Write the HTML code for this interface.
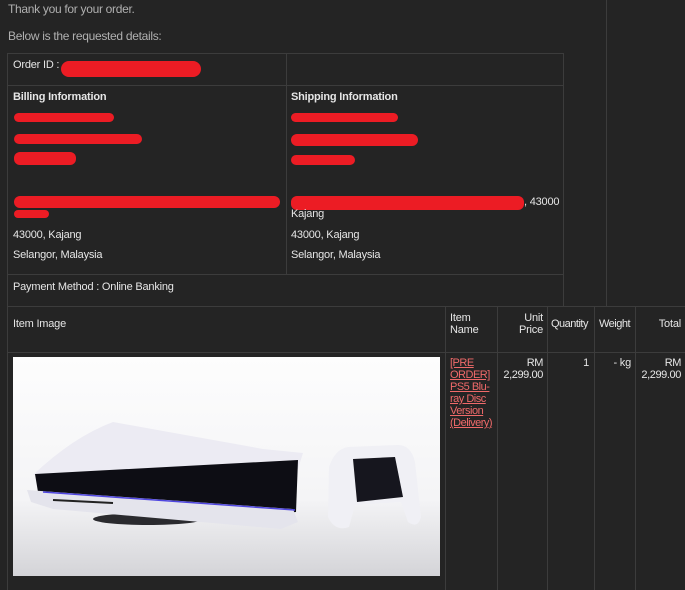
<!DOCTYPE html>
<html><head><meta charset="utf-8"><style>
*{margin:0;padding:0;box-sizing:border-box}
body{width:685px;height:590px;background:#242424;font-family:"Liberation Sans",Arial,sans-serif;font-size:11px;letter-spacing:-0.2px;color:#e6e6e6;position:relative;overflow:hidden}
.a{position:absolute;white-space:nowrap}
.h{position:absolute;height:1px;background:#3c3c3c}
.v{position:absolute;width:1px;background:#3c3c3c}
.r{position:absolute;background:#ec1c24;border-radius:6px}
.g{color:#b0b0b0;font-size:12px;letter-spacing:-0.3px}
b{font-weight:bold}
.lnk{color:#f06a6a;text-decoration:underline;line-height:12px}
</style></head><body>
<div class="a g" style="left:8px;top:2px">Thank you for your order.</div>
<div class="a g" style="left:8px;top:29px">Below is the requested details:</div>

<div class="v" style="left:606px;top:0;height:306px"></div>

<div class="h" style="left:7px;top:53px;width:557px"></div>
<div class="h" style="left:7px;top:85px;width:557px"></div>
<div class="h" style="left:7px;top:274px;width:557px"></div>
<div class="v" style="left:7px;top:53px;height:537px"></div>
<div class="v" style="left:563px;top:53px;height:253px"></div>
<div class="v" style="left:286px;top:53px;height:221px"></div>

<div class="a" style="left:13px;top:59px">Order ID :</div>
<div class="r" style="left:61px;top:61px;width:140px;height:16px;border-radius:8px"></div>
<div class="a" style="left:13px;top:91px"><b>Billing Information</b></div>
<div class="a" style="left:291px;top:91px"><b>Shipping Information</b></div>

<div class="r" style="left:14px;top:113px;width:100px;height:9px"></div>
<div class="r" style="left:14px;top:134px;width:128px;height:10px"></div>
<div class="r" style="left:14px;top:152px;width:62px;height:13px"></div>
<div class="r" style="left:14px;top:196px;width:266px;height:12px"></div>
<div class="r" style="left:14px;top:210px;width:35px;height:8px"></div>
<div class="a" style="left:13px;top:229px">43000, Kajang</div>
<div class="a" style="left:13px;top:249px">Selangor, Malaysia</div>

<div class="r" style="left:291px;top:113px;width:107px;height:9px"></div>
<div class="r" style="left:291px;top:134px;width:127px;height:12px"></div>
<div class="r" style="left:291px;top:155px;width:64px;height:10px"></div>
<div class="r" style="left:291px;top:196px;width:233px;height:14px"></div>
<div class="a" style="left:524px;top:196px">, 43000</div>
<div class="a" style="left:291px;top:208px">Kajang</div>
<div class="a" style="left:291px;top:229px">43000, Kajang</div>
<div class="a" style="left:291px;top:249px">Selangor, Malaysia</div>

<div class="a" style="left:13px;top:281px">Payment Method : Online Banking</div>

<div class="h" style="left:7px;top:306px;width:678px"></div>
<div class="h" style="left:7px;top:352px;width:678px"></div>
<div class="v" style="left:445px;top:306px;height:284px"></div>
<div class="v" style="left:497px;top:306px;height:284px"></div>
<div class="v" style="left:547px;top:306px;height:284px"></div>
<div class="v" style="left:594px;top:306px;height:284px"></div>
<div class="v" style="left:635px;top:306px;height:284px"></div>

<div class="a" style="left:13px;top:318px">Item Image</div>
<div class="a" style="left:450px;top:312px;line-height:12px">Item<br>Name</div>
<div class="a" style="left:500px;top:312px;width:43px;text-align:right;line-height:12px">Unit<br>Price</div>
<div class="a" style="left:551px;top:318px;letter-spacing:-0.5px">Quantity</div>
<div class="a" style="left:599px;top:318px;letter-spacing:-0.5px">Weight</div>
<div class="a" style="left:640px;top:318px;width:41px;text-align:right">Total</div>

<div class="a lnk" style="left:450px;top:357px;letter-spacing:-0.5px">[PRE<br>ORDER]<br>PS5 Blu-<br>ray Disc<br>Version<br>(Delivery)</div>
<div class="a" style="left:499px;top:357px;width:44px;text-align:right;line-height:12px;letter-spacing:-0.4px">RM<br>2,299.00</div>
<div class="a" style="left:551px;top:357px;width:38px;text-align:right">1</div>
<div class="a" style="left:599px;top:357px;width:32px;text-align:right">- kg</div>
<div class="a" style="left:637px;top:357px;width:44px;text-align:right;line-height:12px;letter-spacing:-0.4px">RM<br>2,299.00</div>

<svg class="a" style="left:13px;top:357px" width="427" height="219" viewBox="0 0 427 219">
<defs><linearGradient id="bg" x1="0" y1="0" x2="0" y2="1"><stop offset="0" stop-color="#fdfdfd"/><stop offset=".65" stop-color="#f4f4f6"/><stop offset="1" stop-color="#d4d4d8"/></linearGradient></defs>
<rect width="427" height="219" fill="url(#bg)"/>
<ellipse cx="135" cy="162" rx="55" ry="6" fill="#2a2a2e"/>
<path d="M20 118 Q60 80 100 65 L250 92 L290 96 L285 112 L22 118 Z" fill="#ecebf3"/>
<path d="M22 117 L285 103 L283 155 L250 158 L25 135 Z" fill="#0d0d14"/>
<path d="M14 133 L280 152 L285 165 L268 172 L40 152 L18 145 Z" fill="#e4e4ec"/>
<path d="M40 143 L100 146" stroke="#222" stroke-width="2"/>
<path d="M30 135 L282 153" stroke="#4f46e0" stroke-width="1.5"/>
<path d="M316 110 Q322 92 335 90 L385 88 Q398 88 402 105 L408 160 Q405 172 395 165 L388 145 L342 148 L336 170 Q322 175 315 160 Z" fill="#f0f0f5"/>
<path d="M340 102 L382 100 L390 140 L344 145 Z" fill="#16161e"/>
</svg>
</body></html>
